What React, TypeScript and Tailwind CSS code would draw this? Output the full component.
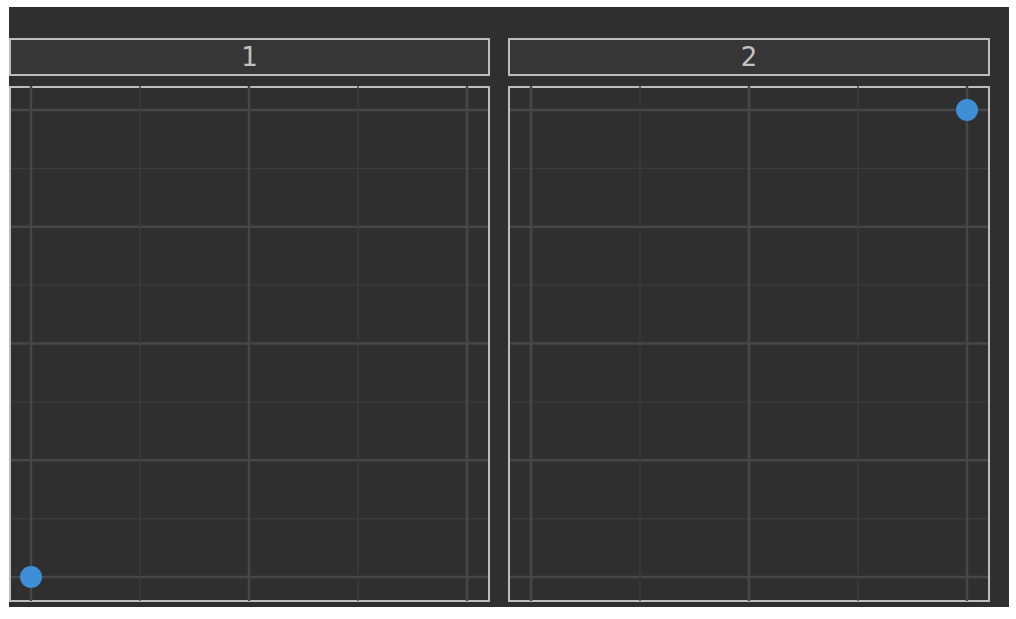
const XS = [0, 1, 2, 3, 4];
const YS = [0, 1, 2, 3, 4, 5, 6, 7, 8];

function Grid({ w, dot }: { w: number; dot: "bl" | "tr" }) {
  const h = 516;
  const x0 = 22 + (w - 481);
  const x1 = x0 + 436;
  const y0 = 24;
  const y1 = h - 25;
  const sx = (x1 - x0) / 4;
  const sy = (y1 - y0) / 8;
  const dx = dot === "bl" ? x0 : x1;
  const dy = dot === "bl" ? y1 : y0;

  return (
    <div className="relative h-[516px] border-2 border-[#bdbdbd] bg-[#2f2f2f]">
      <svg
        className="absolute -left-[2px] -top-[2px]"
        width={w}
        height={h}
        viewBox={`0 0 ${w} ${h}`}
      >
        {YS.map((i) => (
          <line
            key={"h" + i}
            x1={2}
            x2={w - 2}
            y1={y0 + i * sy}
            y2={y0 + i * sy}
            stroke={i % 2 === 0 ? "#474747" : "#3c3c3c"}
            strokeWidth={i % 2 === 0 ? 2.5 : 1.2}
          />
        ))}
        {XS.map((i) => (
          <line
            key={"v" + i}
            x1={x0 + i * sx}
            x2={x0 + i * sx}
            y1={0}
            y2={h - 1}
            stroke={i % 2 === 0 ? "#474747" : "#3c3c3c"}
            strokeWidth={i % 2 === 0 ? 2.5 : 1.4}
          />
        ))}
        <circle cx={dx} cy={dy} r={11} fill="#3f8fd6" />
      </svg>
    </div>
  );
}

function Column({ label, w, dot }: { label: string; w: number; dot: "bl" | "tr" }) {
  return (
    <div className="flex flex-col gap-[10px]">
      <div className="flex h-[38px] items-center justify-center border-2 border-[#bdbdbd] bg-[#363636] font-['DejaVu_Sans',sans-serif] text-[26px] leading-none text-[#c2c2c2]">
        {label}
      </div>
      <Grid w={w} dot={dot} />
    </div>
  );
}

export default function App() {
  return (
    <div className="min-h-[619px] bg-white pl-[9px] pt-[7px]">
      <div className="h-[600px] w-[1000px] bg-[#2f2f2f] pt-[31px]">
        <div className="grid grid-cols-[481px_482px] gap-x-[18px]">
          <Column label="1" w={481} dot="bl" />
          <Column label="2" w={482} dot="tr" />
        </div>
      </div>
    </div>
  );
}
